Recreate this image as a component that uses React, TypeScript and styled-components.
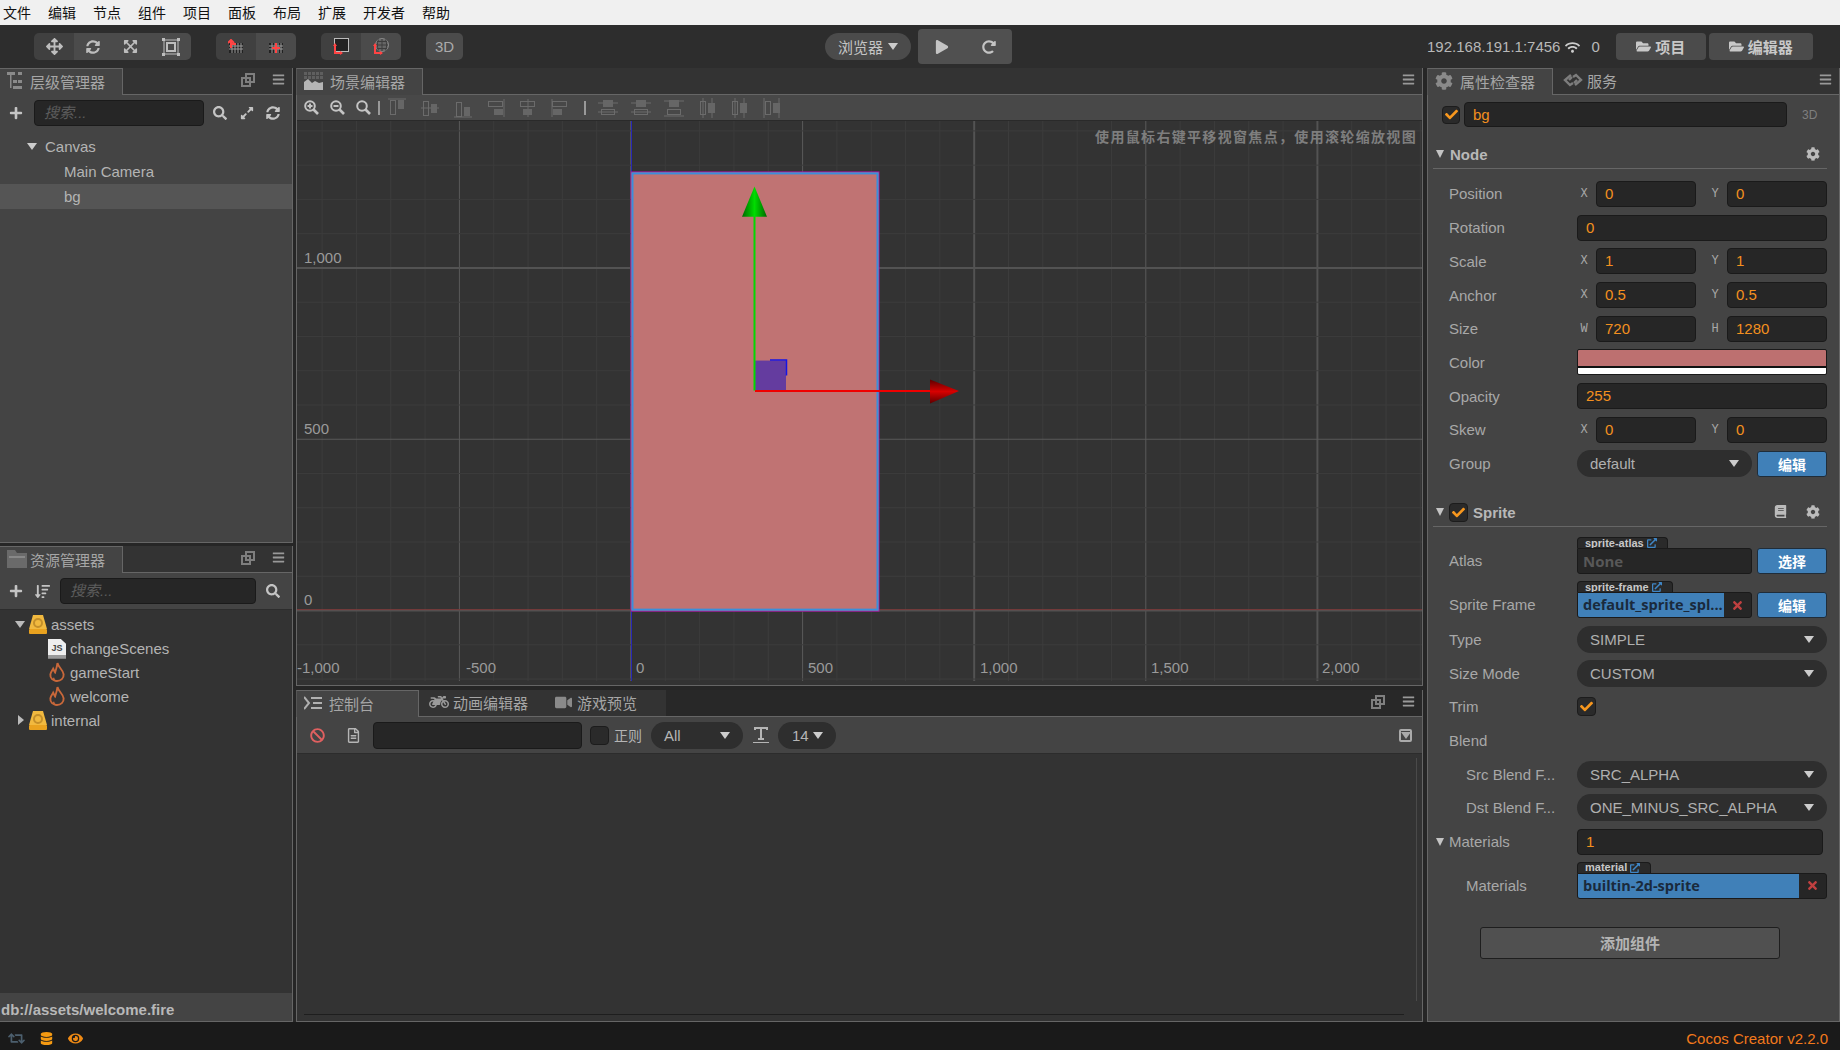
import React from "react";
import styled, { createGlobalStyle } from "styled-components";
import {
  FaArrowsAlt, FaSyncAlt, FaExpandArrowsAlt, FaPlus, FaSearch, FaExpandAlt, FaBars, FaCog, FaFolderOpen,
  FaWifi, FaPlay, FaRedoAlt, FaCheck, FaTimes, FaBook, FaExternalLinkAlt, FaBan, FaRegFileAlt, FaVideo,
  FaMotorcycle, FaEye, FaDatabase, FaRetweet, FaSortAmountDown,
} from "react-icons/fa";

const SANS = `"Liberation Sans", "Noto Sans CJK SC", sans-serif`;

const Global = createGlobalStyle`
  html, body { margin: 0; padding: 0; background: #1a1a1a; overflow: hidden; }
  * { box-sizing: border-box; }
  body { font-family: ${SANS}; font-size: 15px; color: #aaa; }
`;

const Root = styled.div`display: flex; flex-direction: column; width: 1840px; height: 1050px; background: #262626; overflow: hidden;`;

const MenuBar = styled.div`display: flex; height: 25px; flex: none; background: #f0f0f0; padding-left: 3px; align-items: center;`;
const MenuItem = styled.span`color: #111; font-size: 14px; margin-right: 17px; line-height: 25px; padding-top: 2px;`;

const Toolbar = styled.div`display: flex; align-items: center; height: 43px; flex: none; background: #2d2d2d; padding-left: 34px;`;
const ToolGroup = styled.div<{ $ml?: number }>`
  display: flex; height: 27px; border-radius: 5px; overflow: hidden; margin-left: ${p => p.$ml ?? 0}px; flex: none;
`;
const ToolBtn = styled.div<{ $w?: number; $on?: boolean }>`
  width: ${p => p.$w ?? 39}px; display: flex; align-items: center; justify-content: center;
  background: ${p => (p.$on ? "#404040" : "#4b4b4b")}; color: #bdbdbd;
`;
const Text3D = styled(ToolBtn)`font-size: 15px; color: #aaa;`;
const BrowserPill = styled.div`
  display: flex; align-items: center; gap: 5px; width: 86px; height: 27px; margin-left: 362px; padding-left: 13px;
  border-radius: 14px; background: #4b4b4b; color: #c4c4c4; font-size: 15px; flex: none;
`;
const PlayGroup = styled.div`
  display: flex; align-items: center; width: 94px; height: 35px; margin-left: 7px; border-radius: 4px; background: #505050; flex: none; color: #c4c4c4;
`;
const PlayCell = styled.div`width: 47px; display: flex; justify-content: center;`;
const Ip = styled.span`margin-left: 415px; color: #b8b8b8; font-size: 15px;`;
const WifiCount = styled.span`margin-left: 11px; color: #b8b8b8; font-size: 15px;`;
const WifiSlot = styled.span`margin-left: 5px; display: flex; color: #ccc; margin-top: 1px;`;
const OpenBtn = styled.div<{ $w: number; $ml: number }>`
  display: flex; align-items: center; justify-content: center; gap: 4px; width: ${p => p.$w}px; margin-left: ${p => p.$ml}px; height: 27px;
  background: #4b4b4b; border-radius: 4px; color: #c8c8c8; font-size: 15px; font-weight: bold; flex: none;
`;

const Main = styled.div`display: flex; flex: 1; min-height: 0; gap: 4px;`;
const LeftColumn = styled.div`display: flex; flex-direction: column; width: 294px; margin-left: -1px; margin-right: -1px; gap: 3px; flex: none;`;
const CenterColumn = styled.div`display: flex; flex-direction: column; width: 1127px; gap: 4px; flex: none;`;

const Panel = styled.div<{ $h?: number; $w?: number }>`
  display: flex; flex-direction: column; ${p => (p.$h ? `height: ${p.$h}px; flex: none;` : "flex: 1; min-height: 0;")}
  ${p => (p.$w ? `width: ${p.$w}px; flex: none;` : "")}
  border: 1px solid #666; border-top: none; background: #444;
`;
const TabBar = styled.div`
  display: flex; height: 27px; flex: none; background: #333; border-bottom: 1px solid #666; margin-left: -1px; position: relative;
`;
const TabFill = styled.div<{ $dark?: boolean }>`flex: 1; display: flex; justify-content: flex-end; align-items: center; gap: 17px; padding-right: 7px; padding-bottom: 3px; color: #999;
  background: ${p => (p.$dark ? "#282828" : "transparent")}; margin-bottom: ${p => (p.$dark ? "-1px" : "0")}; border-bottom: ${p => (p.$dark ? "1px solid #666" : "none")};`;
const Tab = styled.div<{ $active?: boolean; $min?: number; $gap?: number }>`
  display: flex; align-items: center; gap: ${p => p.$gap ?? 6}px; height: ${p => (p.$active ? 27 : 26)}px; padding: 0 17px 2px ${p => (p.$active ? 7 : 10)}px;
  min-width: ${p => p.$min ?? 0}px; font-size: 15px; color: #a6a6a6; flex: none;
  background: ${p => (p.$active ? "#444" : "#333")};
  ${p => p.$active ? "border-top: 1px solid #666; border-right: 1px solid #666; border-left: 1px solid #555; position: relative; z-index: 1;" : ""}
`;

const SearchRow = styled.div<{ $h: number; $bar?: boolean }>`
  display: flex; align-items: center; height: ${p => p.$h}px; flex: none; padding-left: 7px; color: #c4c4c4; gap: 0;
  ${p => (p.$bar ? "border-bottom: 1px solid #2d2d2d; background: #444;" : "padding-bottom: 1px; margin-bottom: 2px;")}
`;
const IconCell = styled.div<{ $w: number }>`display: flex; width: ${p => p.$w}px; justify-content: center; flex: none;`;
const Search = styled.div<{ $w: number; $ml?: number }>`
  width: ${p => p.$w}px; height: 26px; margin-left: ${p => p.$ml ?? 0}px; background: #262626; border: 1px solid #1a1a1a; border-radius: 4px; flex: none; color: #5c5c5c;
  font-style: italic; font-size: 15px; padding-left: 9px; line-height: 24px;
`;

const HierTree = styled.div`display: flex; flex-direction: column; flex: 1; background: #444;`;
const TreeRow = styled.div<{ $h?: number; $sel?: boolean; $pl: number }>`
  display: flex; align-items: center; gap: 4px; height: ${p => p.$h ?? 25}px; padding-left: ${p => p.$pl}px; color: #b4b4b4; font-size: 15px;
  background: ${p => (p.$sel ? "#555" : "transparent")};
`;
const Caret = styled.span<{ $dir?: "down" | "right"; $c?: string; $mr?: number; $small?: boolean }>`
  width: 0; height: 0; flex: none; display: inline-block; margin-right: ${p => p.$mr ?? 0}px;
  ${p => p.$dir === "right"
    ? `border-top: 5px solid transparent; border-bottom: 5px solid transparent; border-left: 6px solid ${p.$c ?? "#bbb"};`
    : p.$small
      ? `border-left: 4px solid transparent; border-right: 4px solid transparent; border-top: 8px solid ${p.$c ?? "#ccc"};`
      : `border-left: 5px solid transparent; border-right: 5px solid transparent; border-top: 7px solid ${p.$c ?? "#ccc"};`}
`;
const AssetTree = styled.div`display: flex; flex-direction: column; flex: 1; background: #333; padding-top: 3px;`;
const PathBar = styled.div`height: 28px; flex: none; background: #444; color: #b8b8b8; font-weight: bold; font-size: 15px; padding: 3px 0 0 1px; line-height: 28px;`;
const JsFile = styled.div`
  width: 18px; height: 20px; background: linear-gradient(#eee 0 78%, #999 78%); color: #444; font-size: 9px; font-weight: bold; display: flex; align-items: center; justify-content: center; flex: none; line-height: 1;
  clip-path: polygon(0 0, 70% 0, 100% 25%, 100% 100%, 0 100%);
`;

const SceneBar = styled.div`display: flex; align-items: center; height: 26px; flex: none; background: #484848; border-bottom: 1px solid #2a2a2a; padding-left: 1px; color: #c4c4c4;`;
const AlignSlot = styled.div`display: flex; justify-content: center; width: 32.7px; flex: none;`;
const ZoomSlot = styled.div`display: flex; justify-content: center; width: 26px; flex: none;`;
const BarSep = styled.div<{ $ml: number; $mr: number }>`width: 2px; height: 14px; background: #999; margin: 0 ${p => p.$mr}px 0 ${p => p.$ml}px; flex: none;`;
const Canvas = styled.div`flex: 1; position: relative; background: #333; min-height: 0;`;
const Hint = styled.div`
  position: absolute; top: 5px; right: 5px; color: #7e7e7e; font-size: 14px; letter-spacing: 1.33px; font-weight: bold; white-space: nowrap;
`;
const SceneSvg = styled.svg`display: block; width: 100%; height: 100%;`;

const ConsoleBar = styled.div`display: flex; align-items: center; height: 37px; flex: none; background: #444; border-bottom: 1px solid #2c2c2c; color: #b5b5b5;`;
const ConsoleInput = styled.div`width: 209px; height: 27px; background: #262626; border: 1px solid #1a1a1a; border-radius: 4px; flex: none; margin-left: 4px;`;
const ConsoleLabel = styled.span`font-size: 14px; margin-left: 5px; color: #b5b5b5; flex: none;`;
const ConsolePill = styled.div<{ $w: number; $pl: number; $ml: number; $gap: number }>`
  display: flex; align-items: center; justify-content: space-between; width: ${p => p.$w}px; height: 27px; margin-left: ${p => p.$ml}px; border-radius: 14px; background: #2e2e2e; padding: 0 ${p => p.$gap}px 0 ${p => p.$pl}px; color: #b5b5b5; font-size: 15px; flex: none;
`;
const ConsoleBody = styled.div`flex: 1; background: #333; position: relative;`;
const ConsoleScrollV = styled.div`position: absolute; top: 4px; bottom: 20px; right: 5px; width: 1px; background: #4a4a4a;`;
const ConsoleScrollH = styled.div`position: absolute; left: 7px; right: 18px; bottom: 6px; height: 1px; background: #1e1e1e;`;
const CollapseBox = styled.div`width: 13px; height: 13px; margin-left: auto; margin-right: 10px; border: 2px solid #aaa; border-radius: 2px; display: flex; align-items: center; justify-content: center; flex: none;`;

const Inspector = styled.div`display: flex; flex-direction: column; flex: 1; background: #444; padding: 0 12px 0 5px; min-height: 0;`;
const NameRow = styled.div`display: flex; align-items: center; height: 25px; margin-top: 7px; flex: none;`;
const CheckBox = styled.div<{ $ml?: number; $s?: number }>`
  width: ${p => p.$s ?? 19}px; height: ${p => p.$s ?? 19}px; background: #2a2a2a; border: 1px solid #1c1c1c; border-radius: 4px; display: flex; align-items: center; justify-content: center;
  color: #f7971e; margin-left: ${p => p.$ml ?? 0}px; flex: none;
`;
const NameInput = styled.div`
  flex: none; width: 323px; height: 25px; margin-left: 4px; background: #262626; border: 1px solid #1a1a1a; border-radius: 4px; color: #f3901f; font-size: 15px; padding-left: 8px; line-height: 23px;
`;
const Tag3D = styled.span`margin-left: 15px; color: #7f7f7f; font-size: 12px;`;
const SectionHead = styled.div<{ $mt: number }>`
  display: flex; align-items: center; height: 29px; margin-top: ${p => p.$mt}px; flex: none; border-bottom: 1px solid #666; padding-left: 3px; padding-right: 7px; color: #b8b8b8; font-weight: bold; font-size: 15px;
`;
const HeadIcons = styled.div`margin-left: auto; display: flex; gap: 19px; color: #bbb;`;
const SectionName = styled.span<{ $ml: number }>`margin-left: ${p => p.$ml}px;`;
const Spacer = styled.div<{ $h: number }>`height: ${p => p.$h}px; flex: none;`;
const Row = styled.div<{ $h?: number; $mt?: number }>`
  display: flex; align-items: ${p => (p.$h ? "flex-start" : "center")}; height: ${p => p.$h ?? 33.72}px; margin-top: ${p => p.$mt ?? 0}px; flex: none;
`;
const Label = styled.div<{ $indent?: number; $tall?: boolean }>`
  width: 144px; padding-left: ${p => p.$indent ?? 16}px; flex: none; color: #a8a8a8; font-size: 15px; white-space: nowrap; overflow: hidden; padding-right: 6px;
  display: flex; align-items: center; gap: 5px;
  ${p => (p.$tall ? "align-self: flex-end; height: 25px; margin-bottom: 4px;" : "")}
`;
const Value = styled.div`display: flex; flex: none; width: 250px; gap: 12px; align-items: center;`;
const Vec = styled.div`display: flex; align-items: center; width: 119px; flex: none;`;
const Axis = styled.span`width: 19px; flex: none; font-family: "Liberation Mono", monospace; font-size: 12px; color: #a8a8a8; text-align: center; padding-right: 5px;`;
const NumInput = styled.div<{ $w?: number }>`
  flex: ${p => (p.$w ? "none" : "1")}; width: ${p => (p.$w ? `${p.$w}px` : "auto")}; height: 26px; background: #262626; border: 1px solid #1a1a1a; border-radius: 4px; color: #f3901f; font-size: 15px; padding-left: 8px; line-height: 24px;
`;
const Swatch = styled.div`width: 250px; height: 26px; border: 1px solid #1a1a1a; border-radius: 2px; background: linear-gradient(#bd7070 0 68%, #111 68% 74%, #fff 74%); flex: none;`;
const Pill = styled.div<{ $w?: number }>`
  width: ${p => p.$w ?? 250}px; height: 27px; border-radius: 14px; background: #2e2e2e; color: #b0b0b0; font-size: 15px; display: flex; align-items: center; justify-content: space-between; padding: 0 13px 0 13px; flex: none;
`;
const BlueBtn = styled.div`
  width: 70px; height: 26px; margin-left: 5px; border: 1px solid #1f2d3a; border-radius: 3px; background: #4080b8; color: #fff; font-weight: bold; font-size: 14px; display: flex; align-items: center; justify-content: center; flex: none;
`;
const AssetCol = styled.div`display: flex; flex-direction: column; align-items: flex-start; width: 250px; margin-top: 4px; flex: none;`;
const AssetTag = styled.div`
  display: flex; align-items: center; gap: 3px; height: 11px; padding: 0 10px 0 7px; background: #2a2a2a; border: 1px solid #1a1a1a; border-bottom: none; border-radius: 4px 4px 0 0; color: #c8c8c8; font-size: 11px; font-weight: bold; overflow: visible; line-height: 9px;
`;
const TagIcon = styled.span`color: #3f86c6; display: flex;`;
const AssetLine = styled.div`display: flex; align-items: center;`;
const AssetField = styled.div<{ $w: number }>`
  display: flex; width: ${p => p.$w}px; height: 26px; background: #262626; border: 1px solid #1a1a1a; border-radius: 0 3px 3px 3px; overflow: hidden; flex: none;
`;
const NoneText = styled.span`color: #585858; font-family: "Open Sans", sans-serif; font-weight: 700; font-size: 15px; padding-left: 5px; line-height: 24px;`;
const AssetValue = styled.div<{ $w: number }>`
  width: ${p => p.$w}px; background: #4080b8; color: #1a2a3c; font-family: "Open Sans", sans-serif; font-weight: 700; font-size: 14.5px; padding-left: 5px; line-height: 24px; white-space: nowrap; flex: none;
`;
const ClearCell = styled.div`flex: 1; display: flex; align-items: center; justify-content: center; color: #c04040;`;
const AddBtn = styled.div`
  width: 300px; height: 32px; margin: 25px 0 0 47px; background: #505050; border: 1px solid #1e1e1e; border-radius: 3px; color: #b4b4b4; font-size: 15px; font-weight: bold; display: flex; align-items: center; justify-content: center; flex: none;
`;

const Status = styled.div`display: flex; align-items: center; height: 28px; flex: none; background: #1a1a1a; padding: 4px 12px 0 0;`;
const StatusIcon = styled.span<{ $c: string; $w: number }>`display: flex; justify-content: center; width: ${p => p.$w}px; color: ${p => p.$c}; flex: none;`;
const Version = styled.span`margin-left: auto; color: #f2791c; font-size: 15px;`;
const TreeText = styled.span``;

const menus = ["文件", "编辑", "节点", "组件", "项目", "面板", "布局", "扩展", "开发者", "帮助"];
const hint = "使用鼠标右键平移视窗焦点\uFF0C使用滚轮缩放视图";

const FloatIcon = () => (
  <svg width="14" height="14" viewBox="0 0 14 14" fill="none" stroke="#7f7f7f" strokeWidth="2"><rect x="5" y="1" width="8" height="8" /><rect x="1" y="5" width="8" height="8" /></svg>
);
const RectTool = () => (
  <svg width="18" height="18" viewBox="0 0 18 18" fill="none" stroke="#bdbdbd"><rect x="2" y="2" width="14" height="14" /><rect x="5" y="5" width="8" height="8" strokeWidth="2" />
    <g fill="#bdbdbd" stroke="none"><rect x="0" y="0" width="3" height="3" /><rect x="15" y="0" width="3" height="3" /><rect x="0" y="15" width="3" height="3" /><rect x="15" y="15" width="3" height="3" /></g></svg>
);
const PivotIcon = ({ center }: { center?: boolean }) => (
  <svg width="16" height="16" viewBox="0 0 16 16">
    <rect x="1" y="4" width="14" height="10" fill="#222" />
    <path d="M1 7h14M1 10h14M4 4v10M7 4v10M10 4v10M13 4v10" stroke="#bbb" strokeWidth="1" opacity=".8" />
    {center
      ? <path d="M8 4v10M4 9h8" stroke="#f44" strokeWidth="2" />
      : <path d="M3 1v8M0 4l3-3 3 3M3 5h5" stroke="#f44" strokeWidth="2" fill="none" />}
  </svg>
);
const LocalIcon = () => (
  <svg width="16" height="17" viewBox="0 0 16 17" fill="none">
    <rect x="1.500" y="0.500" width="14" height="13" fill="#222" stroke="#bbb" />
    <path d="M2 7v8h7" stroke="#f44" strokeWidth="2" /><path d="M7 13l3 2-3 2zM0 8l2-3 2 3z" fill="#f44" />
  </svg>
);
const WorldIcon = () => (
  <svg width="16" height="17" viewBox="0 0 16 17" fill="none">
    <circle cx="9" cy="7" r="6.500" fill="#666" stroke="#888" />
    <path d="M3 7h12M9 1v12M4 3.500h10M4 10.500h10M5.500 1.500c-1.500 3.500-1.500 7.500 0 11M12.500 1.500c1.500 3.500 1.500 7.500 0 11" stroke="#3d3d3d" />
    <path d="M2 7v8h7" stroke="#f44" strokeWidth="2" /><path d="M7 13l3 2-3 2zM0 8l2-3 2 3z" fill="#f44" />
  </svg>
);
const HierIcon = () => (
  <svg width="16" height="20" viewBox="0 0 16 20" fill="#8a8a8a"><rect x="0" y="1" width="8" height="3" /><rect x="3" y="4" width="1.500" height="13" /><rect x="11" y="1" width="4" height="3" /><rect x="6" y="9" width="4" height="3" /><rect x="11" y="9" width="4" height="3" /><rect x="6" y="15" width="9" height="3" /></svg>
);
const SceneIcon = () => (
  <svg width="19" height="20" viewBox="0 0 19 20"><path d="M0 1h3v3H0zM4 1h3v3H4zM8 1h3v3H8zM12 1h3v3h-3zM16 1h3v3h-3zM0 5h3v3H0zM4 5h3v3H4zM8 5h3v3H8zM12 5h3v3h-3zM16 5h3v3h-3z" fill="#5f5f5f" /><path d="M0 19v-8l4-3 4 4 3-2 4 2 4-1v8z" fill="#b5b5b5" /></svg>
);
const LinkIcon = () => (
  <svg width="20" height="16" viewBox="0 0 20 16" fill="none" stroke="#7d7d7d" strokeWidth="2.400"><path d="M8 3L2 8l5 5 3-2" /><path d="M12 13l6-5-5-5-3 2" /><path d="M6 8l3-3M11 11l3-3" /></svg>
);
const ConsoleIcon = () => (
  <svg width="18" height="14" viewBox="0 0 18 14" fill="none" stroke="#b0b0b0" strokeWidth="2"><path d="M0 1l5 6-5 6" /><path d="M7 2h11M9 7h9M7 12h11" /></svg>
);
const FolderIcon = () => (
  <svg width="20" height="18" viewBox="0 0 20 18"><path d="M0 0h8l2 3h10v15H0z" fill="#6a6a6a" /><rect x="2" y="6" width="16" height="2" fill="#888" /></svg>
);
const DriveIcon = () => (
  <svg width="18" height="21" viewBox="0 0 18 21"><path d="M4 1h10l4 14H0z" fill="#f1b93f" /><rect x="0" y="15" width="18" height="5" rx="1" fill="#e9a21f" /><circle cx="9" cy="9" r="4" fill="none" stroke="#c48f2a" strokeWidth="2" /></svg>
);
const FireIcon = () => (
  <svg width="18" height="20" viewBox="-1 0 19 21" fill="none" stroke="#c9683a" strokeWidth="2"><path d="M9 1c1 5 6 7 6.500 12 .3 4-3 7-7 7s-7.500-3-7-7c.2-2.500 2-4 3-6 1 2 1 3 2 4 1-3 2-6 2.500-10z" /><path d="M8.500 20c-2 0-3.500-1.500-3.500-3.500" strokeWidth="1.500" /></svg>
);
const TextSizeIcon = () => (
  <svg width="16" height="17" viewBox="0 0 16 17" fill="none" stroke="#b5b5b5" strokeWidth="2"><path d="M2 3V1h12v2M8 1v11M5 12h6" /><path d="M0 15.500h16" strokeWidth="1" /></svg>
);
const ZoomIcon = ({ mark }: { mark?: "+" | "-" }) => (
  <svg width="15" height="15" viewBox="0 0 15 15" fill="none" stroke="#c4c4c4" strokeWidth="2"><circle cx="6" cy="6" r="4.800" /><path d="M9.500 9.500L14 14" strokeWidth="2.600" />
    {mark && <path d="M3.500 6h5" />}{mark === "+" && <path d="M6 3.500v5" />}</svg>
);
const AlignIcon = ({ pos, rot }: { pos: number; rot?: boolean }) => {
  const ly = pos === 0 ? 1 : pos === 1 ? 10 : 19;
  const outY = pos === 0 ? 2.500 : pos === 1 ? 3.500 : 4.500;
  const fillY = pos === 0 ? 2 : pos === 1 ? 6 : 9;
  return (
    <svg width="20" height="20" viewBox="0 0 20 20">
      <g transform={rot ? "rotate(90 10 10)" : undefined}>
        <path d={`M1 ${ly}h18`} stroke="#6b6b6b" />
        <rect x="3.500" y={outY} width="5" height={14} fill="none" stroke="#6b6b6b" />
        <rect x="11" y={fillY} width="6" height="9" fill="#666" />
      </g>
    </svg>
  );
};
const DistIcon = ({ rot, pos }: { rot?: boolean; pos: number }) => (
  <svg width="20" height="20" viewBox="0 0 20 20">
    <g transform={rot ? "rotate(90 10 10)" : undefined}>
      <path d={`M0 ${pos === 0 ? 5 : 3}h20M0 ${pos === 0 ? 14 : 18}h20`} stroke="#6b6b6b" />
      <rect x="5" y="2" width="10" height="7" fill="#666" />
      <rect x="3.500" y="11.500" width="13" height="5" fill="none" stroke="#6b6b6b" />
    </g>
  </svg>
);

const Scene = () => {
  const ox = 631, oy = 610.4, step = 34.32;
  const vs: { x: number; k: number }[] = [];
  for (let k = -10; k < 24; k++) vs.push({ x: ox + k * step, k });
  const hs: { y: number; k: number }[] = [];
  for (let k = -3; k < 15; k++) hs.push({ y: oy - k * step, k });
  const stroke = (k: number) => (k % 10 === 0 ? "#535353" : k % 5 === 0 ? "#5a5a5a" : "#3c3c3c");
  const sw = (k: number) => (k % 10 === 0 ? 2 : 1);
  const xLabels = [["-1,000", 297], ["-500", 466], ["0", 636], ["500", 808], ["1,000", 980], ["1,500", 1151], ["2,000", 1322]] as const;
  const yLabels = [["1,000", 262], ["500", 434], ["0", 605]] as const;
  return (
    <SceneSvg viewBox="297 120 1125 565" preserveAspectRatio="none" fontFamily="Liberation Sans" fontSize="15">
      <defs>
        <linearGradient id="gCone" x1="0" x2="1" y1="0" y2="0"><stop offset="0" stopColor="#006800" /><stop offset=".5" stopColor="#00dc00" /><stop offset="1" stopColor="#006800" /></linearGradient>
        <linearGradient id="rCone" x1="0" x2="0" y1="0" y2="1"><stop offset="0" stopColor="#5c0000" /><stop offset=".5" stopColor="#d80000" /><stop offset="1" stopColor="#5c0000" /></linearGradient>
      </defs>
      {vs.map(v => <line key={v.k} x1={v.x} x2={v.x} y1={120} y2={681} stroke={stroke(v.k)} strokeWidth={sw(v.k)} />)}
      {hs.map(h => <line key={h.k} x1={297} x2={1422} y1={h.y} y2={h.y} stroke={stroke(h.k)} strokeWidth={sw(h.k)} />)}
      <line x1={297} x2={1422} y1={609.500} y2={609.500} stroke="#7a3a3a" />
      <line x1={631.500} x2={631.500} y1={120} y2={681} stroke="#2727b8" />
      {xLabels.map(([t, x]) => <text key={t} x={x} y={673} fill="#9a9a9a">{t}</text>)}
      {yLabels.map(([t, y]) => <text key={t} x={304} y={y} fill="#9a9a9a">{t}</text>)}
      <rect x={631} y={171} width={248} height={440} fill="#c07373" stroke="#a313a3" />
      <rect x={632.500} y={172.500} width={245} height={437} fill="none" stroke="#3a8fdc" strokeWidth="2" />
      <rect x={755} y={360} width={31} height={30} fill="#643c9f" />
      <path d="M770 359.500h16.500V375" fill="none" stroke="#1414e6" strokeWidth="1.500" />
      <line x1={754.500} x2={754.500} y1={215} y2={390} stroke="#00d800" strokeWidth="2" />
      <polygon points="754.500,185.500 742,216 767,216" fill="url(#gCone)" />
      <line x1={755} x2={931} y1={390.500} y2={390.500} stroke="#f00000" strokeWidth="2" />
      <polygon points="959,390.500 930,379 930,403" fill="url(#rCone)" />
    </SceneSvg>
  );
};

export default function App() {
  const vec = (l: string, a: string, b: string, ax = "X", ay = "Y") => (
    <Row key={l}>
      <Label>{l}</Label>
      <Value>
        <Vec><Axis>{ax}</Axis><NumInput>{a}</NumInput></Vec>
        <Vec><Axis>{ay}</Axis><NumInput>{b}</NumInput></Vec>
      </Value>
    </Row>
  );
  const select = (l: string, v: string, indent?: number) => (
    <Row key={l}>
      <Label $indent={indent}>{l}</Label>
      <Pill>{v}<Caret $c="#ccc" /></Pill>
    </Row>
  );
  return (
    <Root>
      <Global />
      <MenuBar>{menus.map(m => <MenuItem key={m}>{m}</MenuItem>)}</MenuBar>
      <Toolbar>
        <ToolGroup>
          <ToolBtn $w={40} $on><FaArrowsAlt size={17} /></ToolBtn>
          <ToolBtn $w={37}><FaSyncAlt size={14} /></ToolBtn>
          <ToolBtn $w={39}><FaExpandArrowsAlt size={15} /></ToolBtn>
          <ToolBtn $w={41}><RectTool /></ToolBtn>
        </ToolGroup>
        <ToolGroup $ml={25}>
          <ToolBtn $w={40} $on><PivotIcon /></ToolBtn>
          <ToolBtn $w={40}><PivotIcon center /></ToolBtn>
        </ToolGroup>
        <ToolGroup $ml={25}>
          <ToolBtn $w={40} $on><LocalIcon /></ToolBtn>
          <ToolBtn $w={40}><WorldIcon /></ToolBtn>
        </ToolGroup>
        <ToolGroup $ml={25}><Text3D $w={37}>3D</Text3D></ToolGroup>
        <BrowserPill>浏览器<Caret $c="#ccc" /></BrowserPill>
        <PlayGroup>
          <PlayCell><FaPlay size={14} /></PlayCell>
          <PlayCell><FaRedoAlt size={14} /></PlayCell>
        </PlayGroup>
        <Ip>192.168.191.1:7456</Ip>
        <WifiSlot><FaWifi size={15} /></WifiSlot>
        <WifiCount>0</WifiCount>
        <OpenBtn $w={90} $ml={16}><FaFolderOpen size={15} />项目</OpenBtn>
        <OpenBtn $w={104} $ml={3}><FaFolderOpen size={15} />编辑器</OpenBtn>
      </Toolbar>
      <Main>
        <LeftColumn>
          <Panel $h={475}>
            <TabBar>
              <Tab $active $min={123} $gap={7}><HierIcon />层级管理器</Tab>
              <TabFill><FloatIcon /><FaBars size={13} /></TabFill>
            </TabBar>
            <SearchRow $h={37}>
              <IconCell $w={18}><FaPlus size={14} /></IconCell>
              <Search $w={170} $ml={9}>搜索...</Search>
              <IconCell $w={32}><FaSearch size={14} /></IconCell>
              <IconCell $w={22}><FaExpandAlt size={14} /></IconCell>
              <IconCell $w={30}><FaSyncAlt size={14} /></IconCell>
            </SearchRow>
            <HierTree>
              <TreeRow $pl={27}><Caret $mr={4} />Canvas</TreeRow>
              <TreeRow $pl={64}>Main Camera</TreeRow>
              <TreeRow $pl={64} $sel>bg</TreeRow>
            </HierTree>
          </Panel>
          <Panel>
            <TabBar>
              <Tab $active $min={123} $gap={3}><FolderIcon />资源管理器</Tab>
              <TabFill><FloatIcon /><FaBars size={13} /></TabFill>
            </TabBar>
            <SearchRow $h={37} $bar>
              <IconCell $w={17}><FaPlus size={14} /></IconCell>
              <IconCell $w={36}><FaSortAmountDown size={15} /></IconCell>
              <Search $w={196}>搜索...</Search>
              <IconCell $w={34}><FaSearch size={14} /></IconCell>
            </SearchRow>
            <AssetTree>
              <TreeRow $h={23.800} $pl={15}><Caret $c="#bbb" /><DriveIcon /><TreeText>assets</TreeText></TreeRow>
              <TreeRow $h={23.800} $pl={48}><JsFile>JS</JsFile><TreeText>changeScenes</TreeText></TreeRow>
              <TreeRow $h={23.800} $pl={48}><FireIcon /><TreeText>gameStart</TreeText></TreeRow>
              <TreeRow $h={23.800} $pl={48}><FireIcon /><TreeText>welcome</TreeText></TreeRow>
              <TreeRow $h={23.800} $pl={18}><Caret $dir="right" $mr={1} /><DriveIcon /><TreeText>internal</TreeText></TreeRow>
            </AssetTree>
            <PathBar>db://assets/welcome.fire</PathBar>
          </Panel>
        </LeftColumn>
        <CenterColumn>
          <Panel $h={618}>
            <TabBar>
              <Tab $active $min={125} $gap={7}><SceneIcon />场景编辑器</Tab>
              <TabFill><FaBars size={13} /></TabFill>
            </TabBar>
            <SceneBar>
              <ZoomSlot><ZoomIcon mark="+" /></ZoomSlot>
              <ZoomSlot><ZoomIcon mark="-" /></ZoomSlot>
              <ZoomSlot><ZoomIcon /></ZoomSlot>
              <BarSep $ml={2} $mr={1} />
              <AlignSlot><AlignIcon pos={0} /></AlignSlot>
              <AlignSlot><AlignIcon pos={1} /></AlignSlot>
              <AlignSlot><AlignIcon pos={2} /></AlignSlot>
              <AlignSlot><AlignIcon pos={0} rot /></AlignSlot>
              <AlignSlot><AlignIcon pos={1} rot /></AlignSlot>
              <AlignSlot><AlignIcon pos={2} rot /></AlignSlot>
              <BarSep $ml={7} $mr={6} />
              <AlignSlot><DistIcon pos={0} /></AlignSlot>
              <AlignSlot><DistIcon pos={0} /></AlignSlot>
              <AlignSlot><DistIcon pos={1} /></AlignSlot>
              <AlignSlot><DistIcon pos={0} rot /></AlignSlot>
              <AlignSlot><DistIcon pos={0} rot /></AlignSlot>
              <AlignSlot><DistIcon pos={1} rot /></AlignSlot>
            </SceneBar>
            <Canvas>
              <Scene />
              <Hint>{hint}</Hint>
            </Canvas>
          </Panel>
          <Panel>
            <TabBar>
              <Tab $active $min={123} $gap={7}><ConsoleIcon />控制台</Tab>
              <Tab $gap={4}><FaMotorcycle size={20} color="#9a9a9a" />动画编辑器</Tab>
              <Tab $gap={5} $min={121}><FaVideo size={17} color="#8a8a8a" />游戏预览</Tab>
              <TabFill $dark><FloatIcon /><FaBars size={13} /></TabFill>
            </TabBar>
            <ConsoleBar>
              <IconCell $w={40}><FaBan size={15} color="#e06060" /></IconCell>
              <IconCell $w={32}><FaRegFileAlt size={15} /></IconCell>
              <ConsoleInput />
              <CheckBox $ml={8} />
              <ConsoleLabel>正则</ConsoleLabel>
              <ConsolePill $w={92} $pl={13} $ml={9} $gap={13}>All<Caret $c="#ccc" /></ConsolePill>
              <IconCell $w={35}><TextSizeIcon /></IconCell>
              <ConsolePill $w={58} $pl={14} $ml={0} $gap={13}>14<Caret $c="#ccc" /></ConsolePill>
              <CollapseBox><Caret $c="#aaa" /></CollapseBox>
            </ConsoleBar>
            <ConsoleBody><ConsoleScrollV /><ConsoleScrollH /></ConsoleBody>
          </Panel>
        </CenterColumn>
        <Panel $w={413}>
          <TabBar>
            <Tab $active $min={126} $gap={7}><FaCog size={18} color="#8a8a8a" />属性检查器</Tab>
            <Tab $gap={4}><LinkIcon />服务</Tab>
            <TabFill><FaBars size={13} /></TabFill>
          </TabBar>
          <Inspector>
            <NameRow>
              <CheckBox $ml={9} $s={18}><FaCheck size={13} /></CheckBox>
              <NameInput>bg</NameInput>
              <Tag3D>3D</Tag3D>
            </NameRow>
            <SectionHead $mt={13}>
              <Caret $small $mr={6} $c="#c4c4c4" />
              <SectionName $ml={0}>Node</SectionName>
              <HeadIcons><FaCog size={14} /></HeadIcons>
            </SectionHead>
            <Spacer $h={8} />
            {vec("Position", "0", "0")}
            <Row><Label>Rotation</Label><NumInput $w={250}>0</NumInput></Row>
            {vec("Scale", "1", "1")}
            {vec("Anchor", "0.5", "0.5")}
            {vec("Size", "720", "1280", "W", "H")}
            <Row><Label>Color</Label><Swatch /></Row>
            <Row><Label>Opacity</Label><NumInput $w={250}>255</NumInput></Row>
            {vec("Skew", "0", "0")}
            <Row>
              <Label>Group</Label>
              <Pill $w={175}>default<Caret $c="#ccc" /></Pill>
              <BlueBtn>编辑</BlueBtn>
            </Row>
            <SectionHead $mt={18}>
              <Caret $small $mr={5} $c="#c4c4c4" />
              <CheckBox><FaCheck size={13} /></CheckBox>
              <SectionName $ml={5}>Sprite</SectionName>
              <HeadIcons><FaBook size={13} /><FaCog size={14} /></HeadIcons>
            </SectionHead>
            <Spacer $h={6} />
            <Row $h={44}>
              <Label $tall>Atlas</Label>
              <AssetCol>
                <AssetTag>sprite-atlas<TagIcon><FaExternalLinkAlt size={10} /></TagIcon></AssetTag>
                <AssetLine>
                  <AssetField $w={175}><NoneText>None</NoneText></AssetField>
                  <BlueBtn>选择</BlueBtn>
                </AssetLine>
              </AssetCol>
            </Row>
            <Row $h={44}>
              <Label $tall>Sprite Frame</Label>
              <AssetCol>
                <AssetTag>sprite-frame<TagIcon><FaExternalLinkAlt size={10} /></TagIcon></AssetTag>
                <AssetLine>
                  <AssetField $w={175}><AssetValue $w={146}>default_sprite_spl...</AssetValue><ClearCell><FaTimes size={13} /></ClearCell></AssetField>
                  <BlueBtn>编辑</BlueBtn>
                </AssetLine>
              </AssetCol>
            </Row>
            <Spacer $h={1} />
            {select("Type", "SIMPLE")}
            {select("Size Mode", "CUSTOM")}
            <Row><Label>Trim</Label><CheckBox><FaCheck size={13} /></CheckBox></Row>
            <Row><Label>Blend</Label></Row>
            {select("Src Blend F...", "SRC_ALPHA", 33)}
            {select("Dst Blend F...", "ONE_MINUS_SRC_ALPHA", 33)}
            <Row>
              <Label $indent={3}><Caret $small $c="#c4c4c4" />Materials</Label>
              <NumInput $w={246}>1</NumInput>
            </Row>
            <Row $h={44} $mt={-1}>
              <Label $tall $indent={33}>Materials</Label>
              <AssetCol>
                <AssetTag>material<TagIcon><FaExternalLinkAlt size={10} /></TagIcon></AssetTag>
                <AssetField $w={250}><AssetValue $w={221}>builtin-2d-sprite</AssetValue><ClearCell><FaTimes size={13} /></ClearCell></AssetField>
              </AssetCol>
            </Row>
            <AddBtn>添加组件</AddBtn>
          </Inspector>
        </Panel>
      </Main>
      <Status>
        <StatusIcon $c="#4c5f6e" $w={32}><FaRetweet size={17} /></StatusIcon>
        <StatusIcon $c="#f59a12" $w={29}><FaDatabase size={13} /></StatusIcon>
        <StatusIcon $c="#ef8a14" $w={29}><FaEye size={15} /></StatusIcon>
        <Version>Cocos Creator v2.2.0</Version>
      </Status>
    </Root>
  );
}
